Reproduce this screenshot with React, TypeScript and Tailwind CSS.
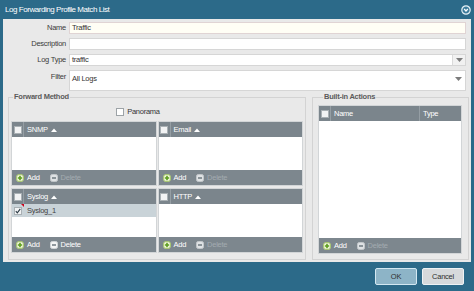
import React from 'react';

const Check = ({ checked = false }: { checked?: boolean }) => (
  <span className="w-[8px] h-[8px] flex items-center justify-center bg-[#f2f3f4] border border-[#a9b0b4]">
    {checked && (
      <svg width="6" height="6" viewBox="0 0 6 6">
        <path d="M0.8 3.2 L2.3 4.8 L5.3 0.8" fill="none" stroke="#2b3a44" strokeWidth="1.1" />
      </svg>
    )}
  </span>
);

const SortUp = () => (
  <svg width="6" height="4" viewBox="0 0 6 4" className="ml-[3px]">
    <path d="M0 4 L3 0.5 L6 4 Z" fill="#ffffff" />
  </svg>
);

const AddIcon = () => (
  <svg width="8" height="8" viewBox="0 0 8 8">
    <rect x="0.5" y="0.5" width="7" height="7" rx="2.6" fill="#eef4d9" stroke="#a7c96a" />
    <path d="M4 1.8 V6.2 M1.8 4 H6.2" stroke="#5c9d1f" strokeWidth="1.6" />
  </svg>
);

const DeleteIcon = ({ enabled = false }: { enabled?: boolean }) => (
  <svg width="8" height="8" viewBox="0 0 8 8">
    <rect x="0.5" y="0.5" width="7" height="7" rx="1.8" fill={enabled ? '#f4f4f4' : '#dfe2e4'} stroke={enabled ? '#d0d4d6' : '#c2c7ca'} />
    <path d="M2 4 H6" stroke="#6f7a81" strokeWidth="1.5" />
  </svg>
);

const Footer = ({ deleteEnabled = false }: { deleteEnabled?: boolean }) => (
  <div className="h-[15px] bg-[#7d878e] flex items-center pl-[4px] gap-[3px] text-white">
    <AddIcon />
    <span>Add</span>
    <span className="ml-[7px]"><DeleteIcon enabled={deleteEnabled} /></span>
    <span className={deleteEnabled ? 'text-white' : 'text-[#a3abb0]'}>Delete</span>
  </div>
);

const ListTable = ({ title, rows = [], deleteEnabled = false }: { title: string; rows?: string[]; deleteEnabled?: boolean }) => (
  <div className="flex flex-col border border-[#d2d5d7] bg-white">
    <div className="h-[15px] bg-[#7b858c] flex items-center text-white">
      <div className="w-[12px] h-full flex items-center justify-center border-r border-[#959ea4]">
        <Check />
      </div>
      <span className="pl-[3px]">{title}</span>
      <SortUp />
    </div>
    <div className="h-[33px] bg-white">
      {rows.map((r) => (
        <div key={r} className="h-[13px] bg-[#c9d3d8] flex items-center">
          <div className="w-[12px] h-full flex items-center justify-center relative">
            <Check checked />
            <span className="absolute top-0 right-0 w-0 h-0 border-t-[3px] border-l-[3px] border-t-[#d0021b] border-l-transparent" />
          </div>
          <span className="pl-[3px] text-[#444]">{r}</span>
        </div>
      ))}
    </div>
    <Footer deleteEnabled={deleteEnabled} />
  </div>
);

const Row = ({ label, children, top = false }: { label: string; children: React.ReactNode; top?: boolean }) => (
  <div className={`flex gap-[3px] ${top ? 'items-start' : 'items-center'}`}>
    <span className={`w-[63px] text-right text-[#3b3b3b] ${top ? 'pt-[2px]' : ''}`}>{label}</span>
    {children}
  </div>
);

const Arrow = () => (
  <svg width="7" height="4" viewBox="0 0 7 4">
    <path d="M0 0 H7 L3.5 4 Z" fill="#7c7c7c" />
  </svg>
);

export default function App() {
  return (
    <div className="w-[474px] h-[291px] bg-[#2c6a89] flex flex-col overflow-hidden [font-family:'Liberation_Sans',Arial,sans-serif] text-[7.5px] tracking-[-0.25px] leading-[10px] text-[#333]">
      <div className="h-[19px] flex items-center justify-between pl-[5px] pr-[3px] text-white text-[8px] tracking-[-0.45px]">
        <span>Log Forwarding Profile Match List</span>
        <svg width="10" height="10" viewBox="0 0 10 10">
          <circle cx="5" cy="5" r="4.2" fill="#3d7c9c" stroke="#e6f0f5" strokeWidth="1.2" />
          <path d="M3.2 4 L5 6 L6.8 4" fill="none" stroke="#ffffff" strokeWidth="1.2" />
        </svg>
      </div>

      <div className="mx-[3px] h-[243px] bg-[#e9e9e9] flex flex-col pt-[3px]">
        <div className="flex flex-col gap-[4px] pr-[5px]">
          <Row label="Name">
            <div className="flex-1 h-[12px] bg-[#fffef5] border border-[#e0d4d4] flex items-center pl-[2px]">Traffic</div>
          </Row>
          <Row label="Description">
            <div className="flex-1 h-[12px] bg-white border border-[#d6d6d6]" />
          </Row>
          <Row label="Log Type">
            <div className="flex-1 h-[12px] bg-white border border-[#d6d6d6] flex items-center">
              <span className="flex-1 pl-[2px]">traffic</span>
              <span className="w-[13px] h-full bg-[#f1f1f1] border-l border-[#dadada] flex items-center justify-center">
                <Arrow />
              </span>
            </div>
          </Row>
          <Row label="Filter" top>
            <div className="flex-1 h-[21px] bg-white border border-[#d6d6d6] flex items-start">
              <span className="flex-1 pl-[2px] pt-[3px]">All Logs</span>
              <span className="w-[13px] pt-[6px] flex justify-center">
                <Arrow />
              </span>
            </div>
          </Row>
        </div>

        <div className="flex gap-[6px] pl-[5px] pr-[2px] mt-[1px]">
          <fieldset className="w-[298px] h-[168px] border border-[#d3d3d3] px-[2px]">
            <legend className="ml-[2px] px-[1px] font-bold text-[#5b5b5b]">Forward Method</legend>
            <div className="flex items-center justify-center gap-[3px] mt-[5px] mb-[4px] pr-[38px]">
              <span className="w-[8px] h-[8px] bg-white border border-[#9da3a7]" />
              <span>Panorama</span>
            </div>
            <div className="grid grid-cols-2 gap-x-[1px] gap-y-[2px]">
              <ListTable title="SNMP" />
              <ListTable title="Email" />
              <ListTable title="Syslog" rows={['Syslog_1']} deleteEnabled />
              <ListTable title="HTTP" />
            </div>
          </fieldset>

          <fieldset className="w-[157px] h-[168px] border border-[#d3d3d3] pl-[5px] pr-[6px]">
            <legend className="ml-[5px] px-[1px] font-bold text-[#5b5b5b]">Built-in Actions</legend>
            <div className="mt-[3px] flex flex-col bg-white border border-[#d2d5d7]">
              <div className="h-[15px] bg-[#7b858c] flex items-center text-white">
                <div className="w-[12px] h-full flex items-center justify-center border-r border-[#959ea4]">
                  <Check />
                </div>
                <span className="flex-1 pl-[3px]">Name</span>
                <span className="w-[42px] h-full flex items-center pl-[3px] border-l border-[#959ea4]">Type</span>
              </div>
              <div className="h-[117px] bg-white" />
              <Footer />
            </div>
          </fieldset>
        </div>
      </div>

      <div className="flex-1 flex items-center justify-end gap-[5px] pr-[10px]">
        <button className="w-[42px] h-[17px] rounded-[2px] bg-[#8db4c7] border border-[#d3e8f2] text-[#2f2f2f]">OK</button>
        <button className="w-[42px] h-[17px] rounded-[2px] bg-[#d6d9db] border border-[#eef2f4] text-[#2f2f2f]">Cancel</button>
      </div>
    </div>
  );
}
